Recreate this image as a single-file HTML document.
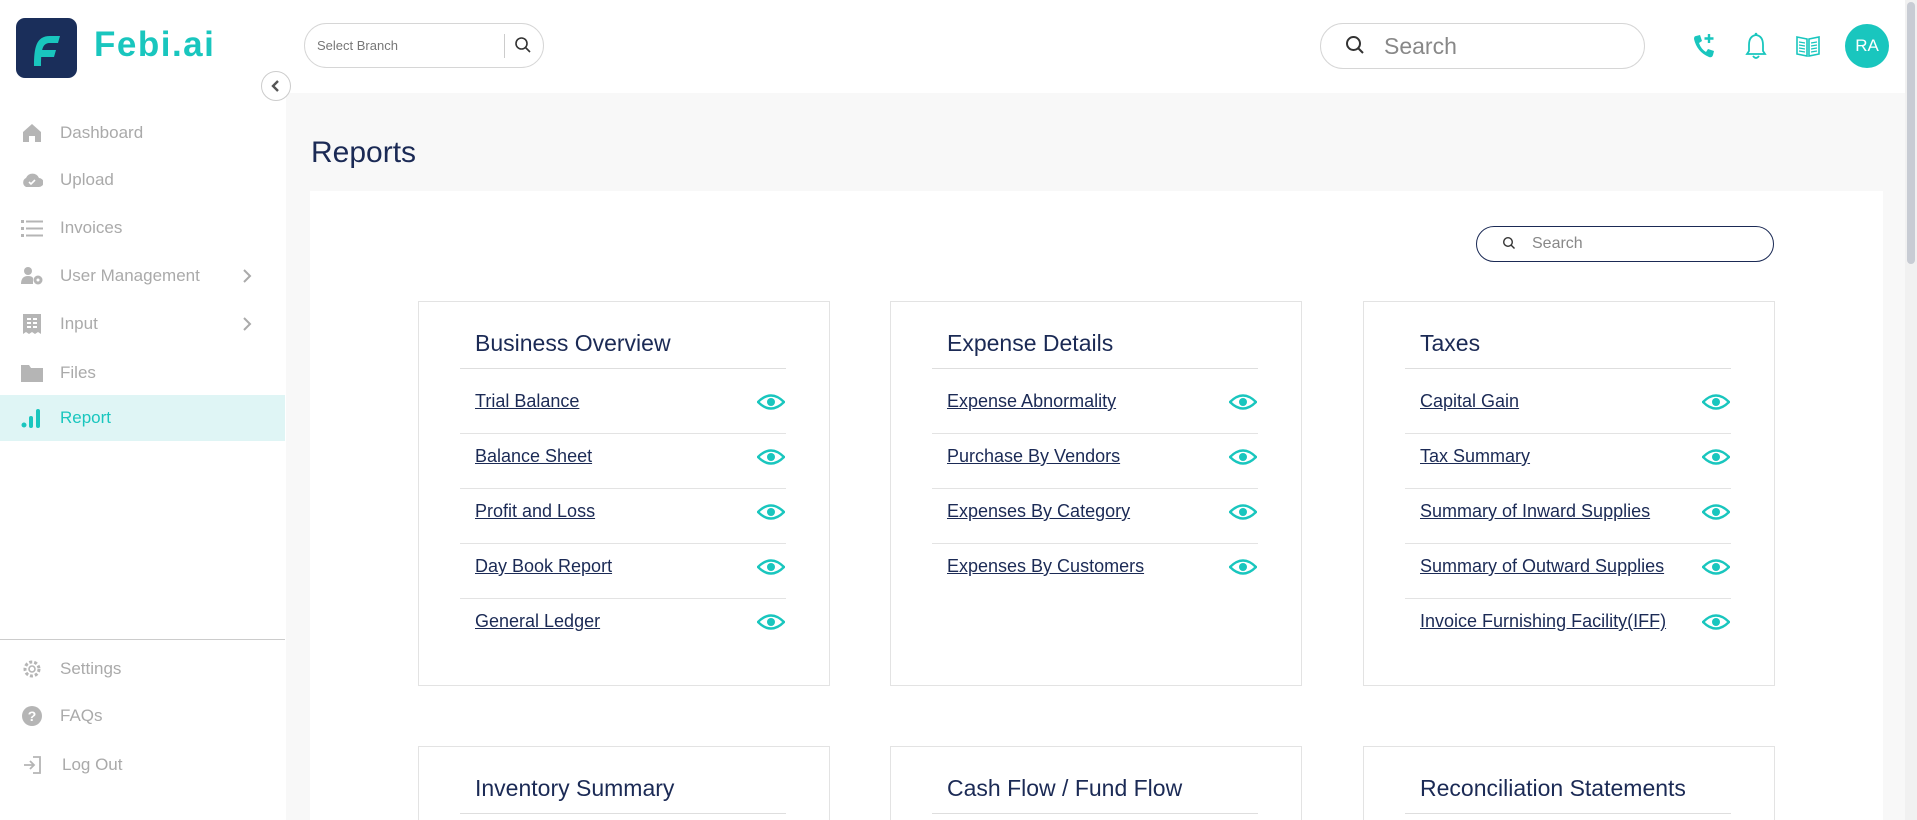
<!DOCTYPE html>
<html style="overflow:hidden;height:820px"><head><meta charset="utf-8"><style>
*{box-sizing:border-box;margin:0;padding:0}
html,body{width:1917px;height:820px;overflow:hidden}
body{background:#fff;font-family:"Liberation Sans",sans-serif;position:relative;color:#1b2a55}
.abs{position:absolute}
.nav{position:absolute;left:0;width:285px;height:46px;display:flex;align-items:center;color:#aaa;font-size:17px}
.nav .ic{position:absolute;left:21px;top:12px;width:22px;height:22px}
.nav span{position:absolute;left:60px}
.nav .chev{position:absolute;left:240px;top:14px}
.card{position:absolute;width:412px;height:385px;border:1px solid #e3e3e3;background:#fff;overflow:hidden}
.card h3{position:absolute;left:56px;top:28px;font-weight:normal;font-size:23px;color:#1b2a55}
.card .hl{position:absolute;left:41px;right:43px;top:66px;border-top:1px solid #dedede}
.item{position:absolute;left:41px;right:43px;height:55px;border-bottom:1px solid #e3e3e3}
.item a{position:absolute;left:15px;top:12px;font-size:18px;color:#1b2a55;text-decoration:underline}
.item svg{position:absolute;right:1px;top:14px}
</style></head><body>
<div class="abs" style="left:16px;top:18px;width:61px;height:60px;background:#1a2e5a;border-radius:9px"></div>
<svg class="abs" style="left:28px;top:30px" width="36" height="38" viewBox="0 0 36 38"><path d="M6 36 C6 18 8 6 22 6 L32 6 L30 13 L22 13 C15 13 13 18 13 36Z M14 20 L28 20 L26 27 L13 27Z" fill="#19c6be"/></svg>
<div class="abs" style="left:94px;top:25px;font-size:35px;font-weight:bold;color:#19c6be;letter-spacing:1.5px">Febi.ai</div>
<div class="abs" style="left:261px;top:71px;width:30px;height:30px;border:1px solid #ccc;border-radius:50%;background:#fff;z-index:3"><svg width="28" height="28" viewBox="0 0 28 28"><path d="M16 9 L11 14 L16 19" stroke="#555" stroke-width="2.4" fill="none"/></svg></div>

<div class="nav" style="top:110px"><svg class="ic" viewBox="0 0 22 22"><path d="M11 2 L20 10 V20 H14 V14 H8 V20 H2 V10Z" fill="#b5b5b5"/></svg><span>Dashboard</span></div>
<div class="nav" style="top:157px"><svg class="ic" viewBox="0 0 22 22"><path d="M5 18 A5 5 0 0 1 5 9 A7 7 0 0 1 18 9 A4.5 4.5 0 0 1 18 18Z" fill="#b5b5b5"/><path d="M8 13 L10 15 L14 11" stroke="#fff" stroke-width="1.6" fill="none"/></svg><span>Upload</span></div>
<div class="nav" style="top:205px"><svg class="ic" viewBox="0 0 22 22" fill="#b5b5b5"><rect x="0" y="3" width="3" height="3"/><rect x="5" y="3.5" width="17" height="2"/><rect x="0" y="10" width="3" height="3"/><rect x="5" y="10.5" width="17" height="2"/><rect x="0" y="17" width="3" height="3"/><rect x="5" y="17.5" width="17" height="2"/></svg><span>Invoices</span></div>
<div class="nav" style="top:253px"><svg class="ic" viewBox="0 0 22 22" fill="#b5b5b5"><circle cx="7" cy="6" r="4"/><path d="M0 19 Q0 11 7 11 Q11 11 12 13 L12 19Z"/><circle cx="17" cy="15" r="4.5"/><circle cx="17" cy="15" r="1.5" fill="#fff"/></svg><span>User Management</span><svg class="chev" width="14" height="18" viewBox="0 0 14 18"><path d="M4 3 L10 9 L4 15" stroke="#aaa" stroke-width="2" fill="none"/></svg></div>
<div class="nav" style="top:301px"><svg class="ic" viewBox="0 0 22 22"><path d="M2 1 H20 V21 L17 19 L14 21 L11 19 L8 21 L5 19 L2 21Z" fill="#b5b5b5"/><g fill="#fff"><rect x="6" y="5" width="4" height="2"/><rect x="12" y="5" width="4" height="2"/><rect x="6" y="9" width="4" height="2"/><rect x="12" y="9" width="4" height="2"/><rect x="6" y="13" width="4" height="2"/><rect x="12" y="13" width="4" height="2"/></g></svg><span>Input</span><svg class="chev" width="14" height="18" viewBox="0 0 14 18"><path d="M4 3 L10 9 L4 15" stroke="#aaa" stroke-width="2" fill="none"/></svg></div>
<div class="nav" style="top:350px"><svg class="ic" viewBox="0 0 22 22"><path d="M0 3 H8 L10 6 H22 V20 H0Z" fill="#b5b5b5"/></svg><span>Files</span></div>
<div class="nav" style="top:395px;background:#dff5f5;color:#19c6be"><svg class="ic" viewBox="0 0 22 22" fill="#19c6be"><circle cx="3" cy="18" r="2.5"/><rect x="8" y="9" width="4" height="12" rx="2"/><rect x="15" y="2" width="4" height="19" rx="2"/></svg><span>Report</span></div>

<div class="abs" style="left:0;top:639px;width:285px;border-top:1px solid #ccc"></div>
<div class="nav" style="top:646px"><svg class="ic" viewBox="0 0 22 22"><circle cx="11" cy="11" r="7" stroke="#b5b5b5" stroke-width="3" stroke-dasharray="3 2" fill="none"/><circle cx="11" cy="11" r="3" stroke="#b5b5b5" stroke-width="1.6" fill="none"/></svg><span>Settings</span></div>
<div class="nav" style="top:693px"><svg class="ic" viewBox="0 0 22 22"><circle cx="11" cy="11" r="10" fill="#b5b5b5"/><text x="11" y="16" font-size="14" font-weight="bold" text-anchor="middle" fill="#fff" font-family="Liberation Sans">?</text></svg><span>FAQs</span></div>
<div class="nav" style="top:742px"><svg class="ic" viewBox="0 0 22 22" stroke="#b5b5b5" stroke-width="1.8" fill="none"><path d="M12 3 H19 V19 H12"/><path d="M3 11 H13 M9 7 L13 11 L9 15"/></svg><span style="left:62px">Log Out</span></div>

<div class="abs" style="left:304px;top:23px;width:240px;height:45px;border:1px solid #d6d6d6;border-radius:23px"></div>
<div class="abs" style="left:317px;top:38px;font-size:13px;color:#777">Select Branch</div>
<div class="abs" style="left:504px;top:34px;height:24px;border-left:1px solid #ccc"></div>
<svg class="abs" style="left:514px;top:36px" width="18" height="18" viewBox="0 0 18 18"><circle cx="7.5" cy="7.5" r="5.5" stroke="#333" stroke-width="1.6" fill="none"/><path d="M11.5 11.5 L16 16" stroke="#333" stroke-width="1.6"/></svg>

<div class="abs" style="left:1320px;top:23px;width:325px;height:46px;border:1px solid #d6d6d6;border-radius:23px"></div>
<svg class="abs" style="left:1345px;top:35px" width="20" height="20" viewBox="0 0 20 20"><circle cx="8.5" cy="8.5" r="6.5" stroke="#333" stroke-width="2" fill="none"/><path d="M13 13 L18 18" stroke="#333" stroke-width="2"/></svg>
<div class="abs" style="left:1384px;top:33px;font-size:23px;color:#888">Search</div>

<svg class="abs" style="left:1693px;top:33px" width="24" height="26" viewBox="0 0 24 26"><path d="M3 3 L7 2 L9 8 L6 10 Q8 16 13 19 L15 16 L21 18 L20 22 Q19 25 16 24 Q4 19 1 6 Q1 3 3 3Z" fill="#19c6be"/><path d="M16 1 V10 M11.5 5.5 H20.5" stroke="#19c6be" stroke-width="2.4"/></svg>
<svg class="abs" style="left:1745px;top:32px" width="22" height="28" viewBox="0 0 22 28"><path d="M11 3 Q4 4 4 13 V19 L2 22 H20 L18 19 V13 Q18 4 11 3Z" stroke="#19c6be" stroke-width="1.8" fill="none"/><path d="M8 24 Q11 28 14 24" stroke="#19c6be" stroke-width="1.8" fill="none"/><circle cx="11" cy="2" r="1.3" fill="#19c6be"/></svg>
<svg class="abs" style="left:1796px;top:35px" width="24" height="22" viewBox="0 0 24 22"><path d="M1 2 L11 4 V21 L1 19Z M13 4 L23 2 V19 L13 21Z" stroke="#19c6be" stroke-width="1.6" fill="none"/><g stroke="#19c6be" stroke-width="1.3"><path d="M3 7 L9 8 M3 10 L9 11 M3 13 L9 14 M3 16 L9 17 M15 8 L21 7 M15 11 L21 10 M15 14 L21 13 M15 17 L21 16"/></g></svg>
<div class="abs" style="left:1845px;top:24px;width:44px;height:44px;border-radius:50%;background:#19c6be;color:#fff;font-size:17px;display:flex;align-items:center;justify-content:center">RA</div>

<div class="abs" style="left:1905px;top:0;width:12px;height:820px;background:#f1f1f1"></div>
<div class="abs" style="left:1907px;top:2px;width:8px;height:262px;background:#c8ccd4;border-radius:4px"></div>

<div class="abs" style="left:286px;top:93px;width:1619px;height:727px;background:#f8f8f8"></div>
<div class="abs" style="left:311px;top:136px;font-size:30px;color:#1b2a55">Reports</div>
<div class="abs" style="left:310px;top:191px;width:1573px;height:629px;background:#fff"></div>
<div class="abs" style="left:1476px;top:226px;width:298px;height:36px;border:1.3px solid #1b2a55;border-radius:18px"></div>
<svg class="abs" style="left:1502px;top:236px" width="14" height="14" viewBox="0 0 14 14"><circle cx="6" cy="6" r="4.3" stroke="#333" stroke-width="1.4" fill="none"/><path d="M9 9 L12.5 12.5" stroke="#333" stroke-width="1.4"/></svg>
<div class="abs" style="left:1532px;top:235px;font-size:16px;color:#888">Search</div>

<svg width="0" height="0" style="position:absolute"><defs><g id="eye"><path d="M1 9 Q14 -4 27 9 Q14 22 1 9Z" stroke="#19c6be" stroke-width="2.4" fill="none"/><circle cx="14" cy="9" r="4" fill="#19c6be"/></g></defs></svg>

<div class="card" style="left:418px;top:301px"><h3>Business Overview</h3><div class="hl"></div>
<div class="item" style="top:77px"><a>Trial Balance</a><svg width="28" height="18"><use href="#eye"/></svg></div>
<div class="item" style="top:132px"><a>Balance Sheet</a><svg width="28" height="18"><use href="#eye"/></svg></div>
<div class="item" style="top:187px"><a>Profit and Loss</a><svg width="28" height="18"><use href="#eye"/></svg></div>
<div class="item" style="top:242px"><a>Day Book Report</a><svg width="28" height="18"><use href="#eye"/></svg></div>
<div class="item" style="top:297px;border:none"><a>General Ledger</a><svg width="28" height="18"><use href="#eye"/></svg></div>
</div>
<div class="card" style="left:890px;top:301px"><h3>Expense Details</h3><div class="hl"></div>
<div class="item" style="top:77px"><a>Expense Abnormality</a><svg width="28" height="18"><use href="#eye"/></svg></div>
<div class="item" style="top:132px"><a>Purchase By Vendors</a><svg width="28" height="18"><use href="#eye"/></svg></div>
<div class="item" style="top:187px"><a>Expenses By Category</a><svg width="28" height="18"><use href="#eye"/></svg></div>
<div class="item" style="top:242px;border:none"><a>Expenses By Customers</a><svg width="28" height="18"><use href="#eye"/></svg></div>
</div>
<div class="card" style="left:1363px;top:301px"><h3>Taxes</h3><div class="hl"></div>
<div class="item" style="top:77px"><a>Capital Gain</a><svg width="28" height="18"><use href="#eye"/></svg></div>
<div class="item" style="top:132px"><a>Tax Summary</a><svg width="28" height="18"><use href="#eye"/></svg></div>
<div class="item" style="top:187px"><a>Summary of Inward Supplies</a><svg width="28" height="18"><use href="#eye"/></svg></div>
<div class="item" style="top:242px"><a>Summary of Outward Supplies</a><svg width="28" height="18"><use href="#eye"/></svg></div>
<div class="item" style="top:297px;border:none"><a>Invoice Furnishing Facility(IFF)</a><svg width="28" height="18"><use href="#eye"/></svg></div>
</div>

<div class="card" style="left:418px;top:746px;height:74px;border-bottom:none"><h3>Inventory Summary</h3><div class="hl"></div></div>
<div class="card" style="left:890px;top:746px;height:74px;border-bottom:none"><h3>Cash Flow / Fund Flow</h3><div class="hl"></div></div>
<div class="card" style="left:1363px;top:746px;height:74px;border-bottom:none"><h3>Reconciliation Statements</h3><div class="hl"></div></div>
</body></html>
